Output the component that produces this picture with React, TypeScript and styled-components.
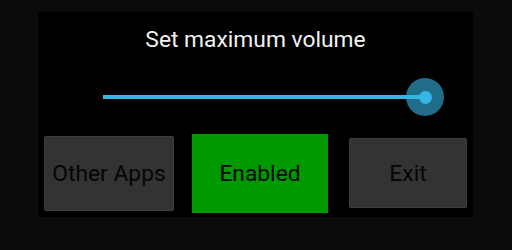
import styled, { createGlobalStyle } from 'styled-components';

const GlobalStyle = createGlobalStyle`
  html, body {
    margin: 0;
    padding: 0;
    background: #0b0b0d;
    width: 512px;
    height: 250px;
    overflow: hidden;
    font-family: Roboto, 'Noto Sans', sans-serif;
  }
`;

const Screen = styled.div`
  width: 512px;
  height: 250px;
  box-sizing: border-box;
  padding: 12px 39px 0 38px;
`;

const Dialog = styled.div`
  background: #000;
  height: 205px;
  box-sizing: border-box;
  padding: 14px 6px 4px;
  display: flex;
  flex-direction: column;
`;

const Title = styled.h1`
  margin: 0;
  font-size: 22.8px;
  line-height: 27px;
  font-weight: 400;
  color: #f2f2f2;
  text-align: center;
`;

const SliderRow = styled.div`
  margin-top: 24px;
  height: 40px;
  display: flex;
  align-items: center;
  padding-left: 59px;
`;

const Track = styled.div`
  position: relative;
  width: 322px;
  height: 4px;
  background: #33b5e5;
`;

const Thumb = styled.div`
  position: absolute;
  right: -19px;
  top: 50%;
  width: 38px;
  height: 38px;
  margin-top: -19px;
  border-radius: 50%;
  background: rgba(51, 181, 229, 0.6);
  display: flex;
  align-items: center;
  justify-content: center;

  &::after {
    content: '';
    width: 13px;
    height: 13px;
    border-radius: 50%;
    background: #33b5e5;
  }
`;

const ButtonRow = styled.div`
  margin-top: 16px;
  height: 80px;
  display: flex;
  align-items: center;
`;

const Button = styled.button<{ $w: number; $h: number; $gap?: number; $green?: boolean }>`
  width: ${({ $w }) => $w}px;
  height: ${({ $h }) => $h}px;
  margin: 0 0 0 ${({ $gap = 0 }) => $gap}px;
  padding: 3px 0 0;
  box-sizing: border-box;
  border-radius: ${({ $green }) => ($green ? '0' : '2px')};
  border: 1px solid ${({ $green }) => ($green ? '#009900' : '#3d3d3d')};
  background: ${({ $green }) => ($green ? '#009900' : '#333333')};
  color: #050505;
  font-family: Roboto, 'Noto Sans', sans-serif;
  font-size: 22.8px;
  line-height: 1;
`;

export default function App() {
  return (
    <>
      <GlobalStyle />
      <Screen>
        <Dialog>
          <Title>Set maximum volume</Title>
          <SliderRow>
            <Track>
              <Thumb />
            </Track>
          </SliderRow>
          <ButtonRow>
            <Button $w={130} $h={75}>Other Apps</Button>
            <Button $w={136} $h={79} $gap={18} $green>Enabled</Button>
            <Button $w={118} $h={70} $gap={21}>Exit</Button>
          </ButtonRow>
        </Dialog>
      </Screen>
    </>
  );
}
